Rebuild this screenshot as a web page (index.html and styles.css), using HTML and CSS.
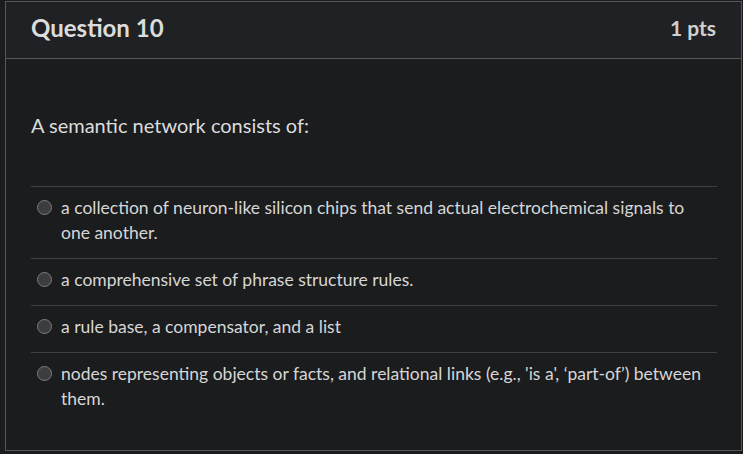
FILE: index.html
```html
<!DOCTYPE html>
<html>
<head>
<meta charset="utf-8">
<link rel="stylesheet" href="styles.css">
</head>
<body>
<div class="question">
  <div class="q-header">
    <h2 class="q-title">Question 10</h2>
    <span class="q-points">1 pts</span>
  </div>
  <div class="q-body">
    <p class="q-text">A semantic network consists of:</p>
    <ul class="answers">
      <li class="answer"><span class="radio"></span><span class="label">a collection of neuron-like silicon chips that send actual electrochemical signals to one another.</span></li>
      <li class="answer"><span class="radio"></span><span class="label">a comprehensive set of phrase structure rules.</span></li>
      <li class="answer"><span class="radio"></span><span class="label">a rule base, a compensator, and a list</span></li>
      <li class="answer"><span class="radio"></span><span class="label">nodes representing objects or facts, and relational links (e.g., 'is a', ‘part-of’) between them.</span></li>
    </ul>
  </div>
</div>
</body>
</html>
```
FILE: styles.css
```css
html, body {
  margin: 0;
  padding: 0;
  background: #1b1c1e;
  font-family: Lato, "Liberation Sans", sans-serif;
  color: #d9d9d9;
}
.question {
  margin: 1px 1px 0 5px;
  height: 448px;
  border: 1px solid #55575a;
  background: #1b1c1e;
  display: flex;
  flex-direction: column;
}
.q-header {
  height: 57px;
  box-sizing: border-box;
  padding: 0 25px 5px 25px;
  background: #202124;
  border-bottom: 1px solid #55575a;
  display: flex;
  align-items: center;
  justify-content: space-between;
}
.q-title {
  margin: 0;
  font-size: 24px;
  font-weight: bold;
  color: #dcdcdc;
}
.q-points {
  font-size: 21px;
  font-weight: bold;
  color: #d0d0d0;
}
.q-body {
  padding: 0 24px 0 25px;
}
.q-text {
  margin: 54px 0 0;
  font-size: 20px;
  line-height: 24px;
  color: #dcdcdc;
}
.answers {
  list-style: none;
  margin: 49px 0 0;
  padding: 0;
}
.answer {
  display: flex;
  align-items: flex-start;
  gap: 9px;
  border-top: 1px solid #3f4043;
  padding: 8px 0 13px 6px;
  font-size: 17.5px;
  line-height: 25px;
  color: #d6d6d6;
}
.radio {
  flex: none;
  width: 13px;
  height: 13px;
  margin-top: 5px;
  border-radius: 50%;
  background: #3c3d40;
  border: 1px solid #7b7c7e;
}
.label {
  flex: 1;
}
```
